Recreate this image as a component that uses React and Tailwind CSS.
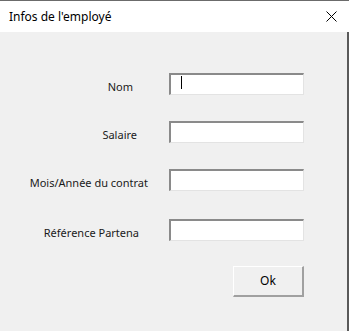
const fields = [
  { label: "Nom", pad: "pr-[36px]", mt: "mt-[41px]", caret: true },
  { label: "Salaire", pad: "pr-[32px]", mt: "mt-[25px]" },
  { label: "Mois/Année du contrat", pad: "pr-[21px]", mt: "mt-[26px]" },
  { label: "Référence Partena", pad: "pr-[30px]", mt: "mt-[27px]" },
];

const Field = ({ label, pad, mt, caret }) => (
  <div className={`flex items-center ${mt}`}>
    <div className={`w-[169px] text-right pt-[6px] ${pad}`}>{label}</div>
    <div className="relative w-[135px] h-[22px] bg-white border-t-2 border-l-2 border-r border-b border-t-[#8a8a8a] border-l-[#8a8a8a] border-r-[#e3e3e3] border-b-[#e3e3e3]">
      {caret && <span className="absolute left-[10px] top-[1px] w-px h-[13px] bg-black"></span>}
    </div>
  </div>
);

const App = () => {
  return (
    <div className="w-[349px] h-[331px] flex flex-col overflow-hidden text-[11px] text-[#1a1a1a]" style={{ fontFamily: '"Noto Sans", "Open Sans", sans-serif' }}>
      <div className="h-px bg-[#6b6b6b]"></div>
      <div className="h-[31px] bg-white flex items-center justify-between pl-[9px] pr-[12px]">
        <span className="text-[12px] text-black">Infos de l'employé</span>
        <svg width="11" height="11" viewBox="0 0 11 11" className="text-black">
          <path d="M0.5 0.5 L10.5 10.5 M10.5 0.5 L0.5 10.5" stroke="currentColor" strokeWidth="1" fill="none" />
        </svg>
      </div>
      <div className="flex-1 flex">
        <div className="flex-1 bg-[#f0f0f0] flex flex-col">
          {fields.map((f) => (
            <Field key={f.label} {...f} />
          ))}
          <div className="flex justify-end pr-[43px] mt-[25px]">
            <button className="w-[71px] h-[31px] bg-[#f0f0f0] border-t border-l border-r-2 border-b-2 border-t-white border-l-white border-r-[#a0a0a0] border-b-[#a0a0a0] text-[12px] text-black">
              Ok
            </button>
          </div>
        </div>
        <div className="w-[2px] bg-[#5a5a5a]"></div>
      </div>
    </div>
  );
};

export default App;
